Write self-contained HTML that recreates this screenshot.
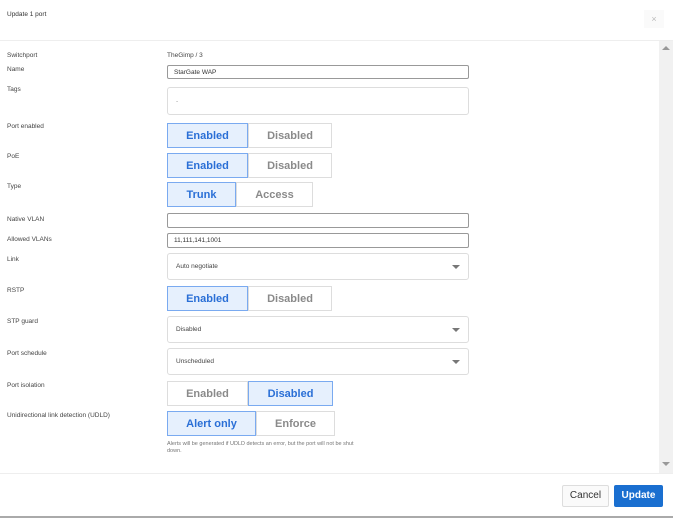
<!DOCTYPE html>
<html><head><style>
*{box-sizing:border-box;margin:0;padding:0}
body{width:673px;height:518px;background:#fff;font-family:"Liberation Sans",sans-serif;position:relative;overflow:hidden;color:#333}
.a{position:absolute}
.l{position:absolute;left:7px;font-size:6.5px;color:#444}
.t{font-size:6.5px;color:#444}
.in{position:absolute;left:167px;width:302px;border:1px solid #999;border-radius:2px;background:#fff;font-size:6.5px;padding-left:6px;display:flex;align-items:center}
.sel{position:absolute;left:167px;width:302px;border:1px solid #ddd;border-radius:3px;font-size:6.5px;padding-left:8px;display:flex;align-items:center;color:#444}
.sel:after{content:"";position:absolute;right:8px;top:50%;margin-top:-2px;border-left:4px solid transparent;border-right:4px solid transparent;border-top:4px solid #777}
.sel.nt:after{display:none}
.seg{position:absolute;left:167px;display:flex;height:25px}
.seg div{border:1px solid #ddd;display:flex;align-items:center;justify-content:center;font-weight:bold;font-size:11px;color:#8a8a8a;background:#fff}
.seg div.on{background:#e6f0fd;border-color:#7aaaf0;color:#2a6fd6}
</style></head><body>
<div class="a t" style="left:7px;top:11px;color:#333">Update 1 port</div>
<div class="a" style="left:644px;top:10px;width:20px;height:18px;background:#fafafa;color:#bbb;font-size:9px;text-align:center;line-height:18px">×</div>
<div class="a" style="left:0;top:40px;width:673px;height:1px;background:#eee"></div>
<div class="a" style="left:659px;top:41px;width:14px;height:432px;background:#f1f1f1"></div>
<div class="a" style="left:662px;top:46px;border-left:4px solid transparent;border-right:4px solid transparent;border-bottom:4px solid #999"></div>
<div class="a" style="left:662px;top:462px;border-left:4px solid transparent;border-right:4px solid transparent;border-top:4px solid #999"></div>

<div class="l" style="top:52px">Switchport</div><div class="a t" style="left:167px;top:52px">TheGimp / 3</div>
<div class="l" style="top:66px">Name</div><div class="in" style="top:65px;height:14px">StarGate WAP</div>
<div class="l" style="top:86px">Tags</div><div class="sel nt" style="top:87px;height:28px;color:#999">-</div>
<div class="l" style="top:123px">Port enabled</div>
<div class="seg" style="top:123px"><div class="on" style="width:81px">Enabled</div><div style="width:84px">Disabled</div></div>
<div class="l" style="top:153px">PoE</div>
<div class="seg" style="top:153px"><div class="on" style="width:81px">Enabled</div><div style="width:84px">Disabled</div></div>
<div class="l" style="top:183px">Type</div>
<div class="seg" style="top:182px"><div class="on" style="width:69px">Trunk</div><div style="width:77px">Access</div></div>
<div class="l" style="top:216px">Native VLAN</div><div class="in" style="top:213px;height:15px"></div>
<div class="l" style="top:236px">Allowed VLANs</div><div class="in" style="top:233px;height:15px">11,111,141,1001</div>
<div class="l" style="top:256px">Link</div><div class="sel" style="top:253px;height:27px">Auto negotiate</div>
<div class="l" style="top:287px">RSTP</div>
<div class="seg" style="top:286px"><div class="on" style="width:81px">Enabled</div><div style="width:84px">Disabled</div></div>
<div class="l" style="top:318px">STP guard</div><div class="sel" style="top:316px;height:27px">Disabled</div>
<div class="l" style="top:350px">Port schedule</div><div class="sel" style="top:348px;height:27px">Unscheduled</div>
<div class="l" style="top:382px">Port isolation</div>
<div class="seg" style="top:381px"><div style="width:81px">Enabled</div><div class="on" style="width:85px">Disabled</div></div>
<div class="l" style="top:412px">Unidirectional link detection (UDLD)</div>
<div class="seg" style="top:411px"><div class="on" style="width:89px">Alert only</div><div style="width:79px">Enforce</div></div>
<div class="a" style="left:167px;top:441px;width:190px;font-size:5.5px;color:#777;line-height:7px">Alerts will be generated if UDLD detects an error, but the port will not be shut down.</div>

<div class="a" style="left:0;top:473px;width:673px;height:1px;background:#eee"></div>
<div class="a" style="left:562px;top:485px;width:47px;height:22px;border:1px solid #ddd;border-radius:2px;background:#fafafa;font-size:10px;color:#333;text-align:center;line-height:20px">Cancel</div>
<div class="a" style="left:614px;top:485px;width:49px;height:22px;border-radius:2px;background:#1a6fd0;font-size:10px;color:#fff;font-weight:bold;text-align:center;line-height:22px">Update</div>
<div class="a" style="left:0;top:516px;width:673px;height:2px;background:#aaa"></div>
</body></html>
